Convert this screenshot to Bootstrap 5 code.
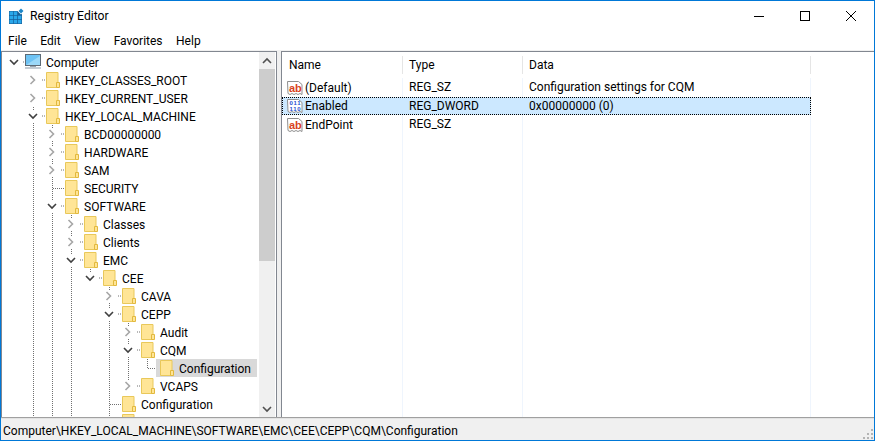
<!DOCTYPE html>
<html lang="en">
<head>
<meta charset="utf-8">
<title>Registry Editor</title>
<link href="https://cdn.jsdelivr.net/npm/bootstrap@5.3.0/dist/css/bootstrap.min.css" rel="stylesheet">
<style>
html,body{height:100%;margin:0;overflow:hidden;background:#fff}
body{font-family:Roboto,"Noto Sans","Liberation Sans",sans-serif;font-size:12px;line-height:18px;color:#000}
.win{height:441px;width:875px;border:1px solid #0078d7;background:#fff}
.titlebar{height:29px;padding-left:8px;padding-top:1px}
.titlebar .ttl{margin-left:5px;font-size:12.2px}
.winbtns{margin-left:auto}
.winbtn{width:46px;height:29px}
.menubar{height:20px;padding-left:7px;gap:13.5px;padding-top:2px}
.panes{flex:1 1 auto;min-height:0;background:#f0f0f0;padding-top:1px}
.treepane{width:276px;border:1px solid #828790;border-bottom:0;background:#fff;overflow:hidden}
.splitgap{width:4px}
.listpane{flex:1 1 auto;border:1px solid #828790;border-right:0;border-bottom:0;background:#fff;overflow:hidden}
.treebody{flex:1 1 auto;padding:1px 0 0 2px;overflow:hidden;min-width:0}
.trow{height:18px;flex:none;padding-top:1px}
.cell{width:19px;height:18px;flex:none;margin-top:-1px}
.vl{background:repeating-linear-gradient(to bottom,#707070 0 1px,transparent 1px 2px) 10px 0/1px 100% no-repeat}
.vh{background:repeating-linear-gradient(to bottom,#707070 0 1px,transparent 1px 2px) 10px 0/1px 9px no-repeat}
.xp{width:23px;height:18px;flex:none;display:block;margin-top:-1px}
.fold{width:14px;height:18px;flex:none;margin-right:3px;margin-top:-1px}
.pcicon{flex:none;margin:-1px 2px 0 -3px}
.tlabel{padding:0 2px;white-space:nowrap}
.sel{background:#d9d9d9;margin-left:-4px;padding-left:4px;width:101px;margin-top:-1px;height:18px;padding-top:1px}
.vscroll{width:16px;flex:none;background:#f0f0f0;margin-right:1px}
.sbtn{height:17px;flex:none;background:#f0f0f0}
.thumb{height:192px;background:#cdcdcd;flex:none}
.strack{flex:1 1 auto}
.lhead{height:19px;margin-top:3px;flex:none}
.lcol{width:120px;flex:none;padding-left:6px;white-space:nowrap;overflow:hidden}
.lcol.firstc{width:121px;padding-left:7px}
.lcol.lastc{width:288px}
.lhead .lcol{border-right:1px solid #e5e5e5}
.lrow{height:19px;flex:none}
.lbody .lcol{border-right:1px solid #eff5fd}
.lbody{margin-top:4px;flex:1 1 auto}
.lbody .lcol.firstc{padding-left:5px;display:flex;align-items:center}
.firstc svg{flex:none;margin-right:2px}
.lsel{background:#cce8ff;outline:1px dotted #000;outline-offset:-1px;height:18px;margin-bottom:0}
.lsel .lcol{border-right-color:transparent!important}
.lfill{flex:1 1 auto}
.statusbar{height:23px;flex:none;background:#f0f0f0;border-top:1px solid #a0a0a0;box-shadow:inset 0 1px 0 #e3e3e3;padding-left:2px;padding-top:3px}
.grip{margin-left:auto;margin-top:auto}
</style>
</head>
<body>
<svg width="0" height="0" class="d-block" aria-hidden="true">
<defs>
<symbol id="right" viewBox="0 0 23 18"><rect x="5" y="3" width="11" height="12" fill="#fff"/><path d="M19 9h1M21 9h1" stroke="#707070"/><path d="M7.500 5 11.500 9 7.500 13" fill="none" stroke="#a6a6a6" stroke-width="1.600"/></symbol>
<symbol id="down" viewBox="0 0 23 18"><rect x="5" y="3" width="11" height="12" fill="#fff"/><path d="M19 9h1M21 9h1" stroke="#707070"/><path d="M6 7 10 11 14 7" fill="none" stroke="#404040" stroke-width="1.600"/></symbol>
<symbol id="elbow" viewBox="0 0 23 18"><path d="M11 9.500h11" stroke="#707070" stroke-dasharray="1 1"/></symbol>
<symbol id="folder" viewBox="0 0 14 18"><path d="M.5 1.500h11.500v15H.5z" fill="#ffe596" stroke="#e9c85a"/><path d="M10.500 11.500h3v5h-3z" fill="#ffe596" stroke="#e2b93e"/></symbol>
<symbol id="absym" viewBox="0 0 16 16"><path d="M.5 1.500h11l3.500 3v10l-2-1-2 1-2-1-2 1-2-1-2 1-2-1z" fill="#fff" stroke="#8f8f8f"/><text x="2" y="11.500" font-family="Liberation Sans,sans-serif" font-weight="700" font-size="11" fill="#d9421c">ab</text></symbol>
<symbol id="binsym" viewBox="0 0 16 16"><path d="M.5 1.500h11l3.500 3v10l-2-1-2 1-2-1-2 1-2-1-2 1-2-1z" fill="#fff" stroke="#8f8f8f"/><text x="2.500" y="7" font-family="Liberation Sans,sans-serif" font-weight="700" font-size="6" textLength="11" lengthAdjust="spacing" fill="#1f4fd0">011</text><text x="2.500" y="13" font-family="Liberation Sans,sans-serif" font-weight="700" font-size="6" textLength="11" lengthAdjust="spacing" fill="#1f4fd0">110</text></symbol>
</defs>
</svg>
<div class="win d-flex flex-column">
  <div class="titlebar d-flex align-items-center">
    <svg width="16" height="16" viewBox="0 0 16 16"><rect x="0" y="3" width="13" height="13" fill="#17609a"/><g fill="#2aa7ea"><rect x=".5" y="3.500" width="3.500" height="3.500"/><rect x="4.700" y="3.500" width="3.500" height="3.500"/><rect x=".5" y="7.700" width="3.500" height="3.500"/><rect x="4.700" y="7.700" width="3.500" height="3.500"/><rect x="8.900" y="7.700" width="3.500" height="3.500"/><rect x=".5" y="11.900" width="3.500" height="3.500"/><rect x="4.700" y="11.900" width="3.500" height="3.500"/><rect x="8.900" y="11.900" width="3.500" height="3.500"/></g><path d="M12 -.5 15.500 3 12 6.500 8.500 3z" fill="#fff"/><path d="M12 .5 14.500 3 12 5.500 9.500 3z" fill="#1b86c8"/></svg>
    <span class="ttl">Registry Editor</span>
    <div class="winbtns d-flex">
      <div class="winbtn d-flex align-items-center justify-content-center"><svg width="10" height="10" viewBox="0 0 10 10"><path d="M0 5.500h10" stroke="#000"/></svg></div>
      <div class="winbtn d-flex align-items-center justify-content-center"><svg width="10" height="10" viewBox="0 0 10 10"><rect x=".5" y=".5" width="9" height="9" fill="none" stroke="#000"/></svg></div>
      <div class="winbtn d-flex align-items-center justify-content-center"><svg width="10" height="10" viewBox="0 0 10 10"><path d="M0 0 10 10M10 0 0 10" stroke="#000"/></svg></div>
    </div>
  </div>
  <div class="menubar d-flex align-items-center"><span>File</span><span>Edit</span><span>View</span><span>Favorites</span><span>Help</span></div>
  <div class="panes d-flex">
    <div class="treepane d-flex">
      <div class="treebody d-flex flex-column">
        <div class="trow d-flex align-items-center"><svg class="xp"><use href="#down"/></svg><svg width="18" height="18" viewBox="0 0 18 18" class="pcicon"><rect x="1.500" y="1.500" width="15" height="11" fill="#6ec3f4" stroke="#5d6a75"/><path d="M2 12 16 3v9z" fill="#9bd8f8"/><rect x="6" y="13" width="6" height="1" fill="#98a4ae"/><rect x="1" y="14" width="16" height="2" fill="#c4ccd3"/></svg><span class="tlabel">Computer</span></div>
        <div class="trow d-flex align-items-center"><div class="cell"></div><svg class="xp"><use href="#right"/></svg><svg class="fold"><use href="#folder"/></svg><span class="tlabel">HKEY_CLASSES_ROOT</span></div>
        <div class="trow d-flex align-items-center"><div class="cell"></div><svg class="xp"><use href="#right"/></svg><svg class="fold"><use href="#folder"/></svg><span class="tlabel">HKEY_CURRENT_USER</span></div>
        <div class="trow d-flex align-items-center"><div class="cell"></div><svg class="xp vl"><use href="#down"/></svg><svg class="fold"><use href="#folder"/></svg><span class="tlabel">HKEY_LOCAL_MACHINE</span></div>
        <div class="trow d-flex align-items-center"><div class="cell"></div><div class="cell vl"></div><svg class="xp vl"><use href="#right"/></svg><svg class="fold"><use href="#folder"/></svg><span class="tlabel">BCD00000000</span></div>
        <div class="trow d-flex align-items-center"><div class="cell"></div><div class="cell vl"></div><svg class="xp vl"><use href="#right"/></svg><svg class="fold"><use href="#folder"/></svg><span class="tlabel">HARDWARE</span></div>
        <div class="trow d-flex align-items-center"><div class="cell"></div><div class="cell vl"></div><svg class="xp vl"><use href="#right"/></svg><svg class="fold"><use href="#folder"/></svg><span class="tlabel">SAM</span></div>
        <div class="trow d-flex align-items-center"><div class="cell"></div><div class="cell vl"></div><svg class="xp vl"><use href="#elbow"/></svg><svg class="fold"><use href="#folder"/></svg><span class="tlabel">SECURITY</span></div>
        <div class="trow d-flex align-items-center"><div class="cell"></div><div class="cell vl"></div><svg class="xp vl"><use href="#down"/></svg><svg class="fold"><use href="#folder"/></svg><span class="tlabel">SOFTWARE</span></div>
        <div class="trow d-flex align-items-center"><div class="cell"></div><div class="cell vl"></div><div class="cell vl"></div><svg class="xp vl"><use href="#right"/></svg><svg class="fold"><use href="#folder"/></svg><span class="tlabel">Classes</span></div>
        <div class="trow d-flex align-items-center"><div class="cell"></div><div class="cell vl"></div><div class="cell vl"></div><svg class="xp vl"><use href="#right"/></svg><svg class="fold"><use href="#folder"/></svg><span class="tlabel">Clients</span></div>
        <div class="trow d-flex align-items-center"><div class="cell"></div><div class="cell vl"></div><div class="cell vl"></div><svg class="xp vl"><use href="#down"/></svg><svg class="fold"><use href="#folder"/></svg><span class="tlabel">EMC</span></div>
        <div class="trow d-flex align-items-center"><div class="cell"></div><div class="cell vl"></div><div class="cell vl"></div><div class="cell vl"></div><svg class="xp vh"><use href="#down"/></svg><svg class="fold"><use href="#folder"/></svg><span class="tlabel">CEE</span></div>
        <div class="trow d-flex align-items-center"><div class="cell"></div><div class="cell vl"></div><div class="cell vl"></div><div class="cell vl"></div><div class="cell"></div><svg class="xp vl"><use href="#right"/></svg><svg class="fold"><use href="#folder"/></svg><span class="tlabel">CAVA</span></div>
        <div class="trow d-flex align-items-center"><div class="cell"></div><div class="cell vl"></div><div class="cell vl"></div><div class="cell vl"></div><div class="cell"></div><svg class="xp vl"><use href="#down"/></svg><svg class="fold"><use href="#folder"/></svg><span class="tlabel">CEPP</span></div>
        <div class="trow d-flex align-items-center"><div class="cell"></div><div class="cell vl"></div><div class="cell vl"></div><div class="cell vl"></div><div class="cell"></div><div class="cell vl"></div><svg class="xp vl"><use href="#right"/></svg><svg class="fold"><use href="#folder"/></svg><span class="tlabel">Audit</span></div>
        <div class="trow d-flex align-items-center"><div class="cell"></div><div class="cell vl"></div><div class="cell vl"></div><div class="cell vl"></div><div class="cell"></div><div class="cell vl"></div><svg class="xp vl"><use href="#down"/></svg><svg class="fold"><use href="#folder"/></svg><span class="tlabel">CQM</span></div>
        <div class="trow d-flex align-items-center"><div class="cell"></div><div class="cell vl"></div><div class="cell vl"></div><div class="cell vl"></div><div class="cell"></div><div class="cell vl"></div><div class="cell vl"></div><svg class="xp vh"><use href="#elbow"/></svg><div class="sel d-flex align-items-center"><svg class="fold"><use href="#folder"/></svg><span class="tlabel">Configuration</span></div></div>
        <div class="trow d-flex align-items-center"><div class="cell"></div><div class="cell vl"></div><div class="cell vl"></div><div class="cell vl"></div><div class="cell"></div><div class="cell vl"></div><svg class="xp vh"><use href="#right"/></svg><svg class="fold"><use href="#folder"/></svg><span class="tlabel">VCAPS</span></div>
        <div class="trow d-flex align-items-center"><div class="cell"></div><div class="cell vl"></div><div class="cell vl"></div><div class="cell vl"></div><div class="cell"></div><svg class="xp vl"><use href="#elbow"/></svg><svg class="fold"><use href="#folder"/></svg><span class="tlabel">Configuration</span></div>
        <div class="trow d-flex align-items-center"><div class="cell"></div><div class="cell vl"></div><div class="cell vl"></div><div class="cell vl"></div><div class="cell"></div><svg class="xp vl"><use href="#elbow"/></svg><svg class="fold"><use href="#folder"/></svg></div>
      </div>
      <div class="vscroll d-flex flex-column">
        <div class="sbtn d-flex align-items-center justify-content-center"><svg width="10" height="8" viewBox="0 0 10 8"><path d="M1 6 5 2 9 6" fill="none" stroke="#505050" stroke-width="1.600"/></svg></div>
        <div class="thumb"></div>
        <div class="strack"></div>
        <div class="sbtn d-flex align-items-center justify-content-center"><svg width="10" height="8" viewBox="0 0 10 8"><path d="M1 2 5 6 9 2" fill="none" stroke="#505050" stroke-width="1.600"/></svg></div>
      </div>
    </div>
    <div class="splitgap"></div>
    <div class="listpane d-flex flex-column">
      <div class="lhead d-flex align-items-center"><div class="lcol firstc">Name</div><div class="lcol">Type</div><div class="lcol lastc">Data</div></div>
      <div class="lbody d-flex flex-column">
        <div class="lrow d-flex"><div class="lcol firstc"><svg width="16" height="16"><use href="#absym"/></svg>(Default)</div><div class="lcol">REG_SZ</div><div class="lcol lastc">Configuration settings for CQM</div></div>
        <div class="lrow lsel d-flex align-self-start"><div class="lcol firstc"><svg width="16" height="16"><use href="#binsym"/></svg>Enabled</div><div class="lcol">REG_DWORD</div><div class="lcol lastc">0x00000000 (0)</div></div>
        <div class="lrow d-flex"><div class="lcol firstc"><svg width="16" height="16"><use href="#absym"/></svg>EndPoint</div><div class="lcol">REG_SZ</div><div class="lcol lastc"></div></div>
        <div class="lfill d-flex"><div class="lcol firstc"></div><div class="lcol"></div><div class="lcol lastc"></div></div>
      </div>
    </div>
  </div>
  <div class="statusbar d-flex align-items-center"><span>Computer\HKEY_LOCAL_MACHINE\SOFTWARE\EMC\CEE\CEPP\CQM\Configuration</span>
    <svg class="grip" width="11" height="11" viewBox="0 0 11 11"><g fill="#b4b4b4"><rect x="8" y="0" width="2" height="2"/><rect x="4" y="4" width="2" height="2"/><rect x="8" y="4" width="2" height="2"/><rect x="0" y="8" width="2" height="2"/><rect x="4" y="8" width="2" height="2"/><rect x="8" y="8" width="2" height="2"/></g></svg>
  </div>
</div>
</body>
</html>
